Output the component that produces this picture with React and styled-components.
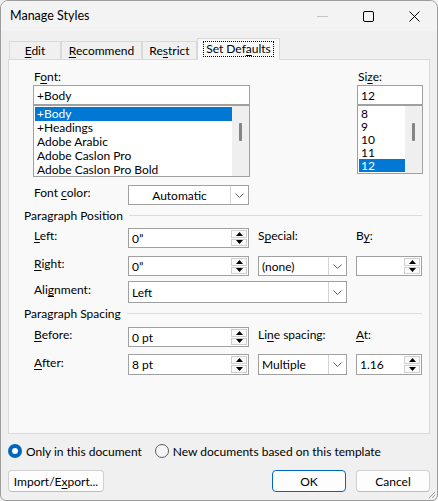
import React from "react";
import styled, { createGlobalStyle } from "styled-components";

const GlobalStyle = createGlobalStyle`
  html, body {
    margin: 0;
    padding: 0;
    background: #f0f0f0;
  }
  body {
    font-family: Lato, "Noto Sans", "DejaVu Sans", sans-serif;
    font-size: 12px;
    color: #000;
  }
`;

const Window = styled.div`
  position: relative;
  box-sizing: border-box;
  width: 438px;
  height: 501px;
  border: 1px solid #9c9c9c;
  border-radius: 8px 8px 6px 6px;
  background: #f0f0f0;
  display: flex;
  flex-direction: column;
  overflow: hidden;
`;

const TitleBar = styled.div`
  height: 30px;
  flex: none;
  display: flex;
  align-items: center;
  background: #f3f3f3;
`;

const Title = styled.div`
  flex: 1;
  padding-left: 9px;
  font-size: 12.5px;
  line-height: 30px;
`;

const CaptionButton = styled.div`
  width: 46px;
  height: 30px;
  display: flex;
  align-items: center;
  justify-content: center;
`;

const Body = styled.div`
  flex: 1;
  display: flex;
  flex-direction: column;
  padding: 7px 7px 8px 7px;
  min-height: 0;
`;

const Tabs = styled.div`
  display: flex;
  align-items: flex-end;
  height: 22px;
  padding-left: 1px;
  margin-bottom: -1px;
  position: relative;
  z-index: 1;
`;

const Tab = styled.div`
  box-sizing: border-box;
  width: ${p => p.$w}px;
  height: ${p => (p.$active ? 22 : 19)}px;
  border: 1px solid #d9d9d9;
  border-bottom: ${p => (p.$active ? "none" : "1px solid #d9d9d9")};
  background: ${p => (p.$active ? "#f9f9f9" : "#f0f0f0")};
  display: flex;
  align-items: center;
  justify-content: center;
  padding-bottom: ${p => (p.$active ? 2 : 1)}px;
`;

const Focus = styled.span`
  border: 1px dotted #000;
  padding: 0 2px;
  line-height: 14px;
`;

const Key = styled.span`
  text-decoration: underline;
  text-underline-offset: 2px;
`;

const Panel = styled.div`
  flex: 1;
  box-sizing: border-box;
  border: 1px solid #d9d9d9;
  background: #f9f9f9;
  padding: 9px 6px 0 15px;
  display: flex;
  flex-direction: column;
`;

const FontBlock = styled.div`
  display: grid;
  grid-template-columns: 217px 1fr 66px;
  padding-left: 9px;
`;

const Column = styled.div`
  display: flex;
  flex-direction: column;
  grid-column: ${p => p.$col};
`;

const TopLabel = styled.div`
  height: 15px;
  line-height: 15px;
  padding-left: 1px;
  margin-bottom: 1px;
`;

const Row = styled.div`
  display: grid;
  grid-template-columns: 95px 121px 89px 66px;
  column-gap: 9px;
  height: ${p => p.$h}px;
  margin-top: ${p => p.$mt}px;
  align-items: center;
`;

const Label = styled.div`
  padding-left: ${p => (p.$indent ? 10 : 0)}px;
  grid-column: ${p => p.$col || "auto"};
  padding-bottom: 5px;
  white-space: nowrap;
`;

const Header = styled.div`
  display: flex;
  align-items: center;
  gap: 6px;
  height: 16px;
  margin-top: ${p => p.$mt}px;
  width: 398px;
  &::after {
    content: "";
    flex: 1;
    height: 1px;
    background: #dcdcdc;
  }
`;

const Field = styled.div`
  box-sizing: border-box;
  height: ${p => p.$h || 20}px;
  border: 1px solid #a0a0a0;
  background: #fff;
  display: flex;
  align-items: stretch;
  grid-column: ${p => p.$span || "auto"};
`;

const FieldText = styled.div`
  flex: 1;
  padding-left: ${p => (p.$center ? 0 : 3)}px;
  display: flex;
  align-items: center;
  justify-content: ${p => (p.$center ? "center" : "flex-start")};
  white-space: nowrap;
`;

const Spin = styled.div`
  width: 16px;
  display: flex;
  flex-direction: column;
  justify-content: center;
  gap: 1px;
  padding: 1px 1px 1px 0;
`;

const SpinButton = styled.div`
  flex: 1;
  max-height: 8px;
  border: 1px solid #cfcfcf;
  background: #fafafa;
  display: flex;
  align-items: center;
  justify-content: center;
`;

const DropButton = styled.div`
  width: 17px;
  border-left: 1px solid #d4d4d4;
  display: flex;
  align-items: center;
  justify-content: center;
`;

const ListBox = styled.div`
  box-sizing: border-box;
  height: ${p => p.$h}px;
  border: 1px solid #a0a0a0;
  background: #fff;
  display: flex;
`;

const Items = styled.div`
  flex: 1;
  padding: 1px 0 0 1px;
  overflow: hidden;
`;

const Item = styled.div`
  height: ${p => p.$ih}px;
  line-height: ${p => p.$ih}px;
  padding-left: 2px;
  white-space: nowrap;
  background: ${p => (p.$sel ? "#0078d4" : "transparent")};
  color: ${p => (p.$sel ? "#fff" : "#000")};
`;

const Track = styled.div`
  width: 17px;
  background: #efefef;
  display: flex;
  justify-content: center;
  padding-top: 17px;
`;

const Thumb = styled.div`
  width: 3px;
  height: 18px;
  border-radius: 1px;
  background: #858585;
`;

const RadioRow = styled.div`
  display: flex;
  align-items: center;
  height: 14px;
  margin-top: 10px;
  gap: 13px;
`;

const RadioOption = styled.div`
  display: flex;
  align-items: center;
  gap: 4px;
  white-space: nowrap;
`;

const RadioDot = styled.div`
  box-sizing: border-box;
  width: 14px;
  height: 14px;
  border-radius: 50%;
  border: ${p => (p.$on ? "none" : "1px solid #5c5c5c")};
  background: ${p => (p.$on ? "#0067c0" : "#f5f5f5")};
  display: flex;
  align-items: center;
  justify-content: center;
  &::after {
    content: "";
    display: ${p => (p.$on ? "block" : "none")};
    width: 6px;
    height: 6px;
    border-radius: 50%;
    background: #fff;
  }
`;

const ButtonRow = styled.div`
  display: flex;
  margin-top: 12px;
  gap: 10px;
`;

const Button = styled.div`
  box-sizing: border-box;
  width: ${p => p.$w}px;
  height: 22px;
  border: 1px solid ${p => (p.$primary ? "#0067c0" : "#d0d0d0")};
  border-bottom-color: ${p => (p.$primary ? "#0067c0" : "#bdbdbd")};
  border-radius: 4px;
  background: #fdfdfd;
  display: flex;
  align-items: center;
  justify-content: center;
  margin-left: ${p => (p.$push ? "auto" : "0")};
`;

const Grip = styled.svg`
  position: absolute;
  right: 1px;
  bottom: 1px;
`;

const Up = () => (
  <svg width="7" height="4" viewBox="0 0 7 4"><path d="M0 4 L3.5 0 L7 4 Z" fill="#000" /></svg>
);
const Down = () => (
  <svg width="7" height="4" viewBox="0 0 7 4"><path d="M0 0 L3.5 4 L7 0 Z" fill="#000" /></svg>
);
const Chevron = () => (
  <svg width="9" height="5" viewBox="0 0 9 5"><path d="M0.5 0.5 L4.5 4.5 L8.5 0.5" fill="none" stroke="#606060" strokeWidth="1" /></svg>
);

const SpinBox = ({ value, h }) => (
  <Field $h={h}>
    <FieldText>{value}</FieldText>
    <Spin>
      <SpinButton><Up /></SpinButton>
      <SpinButton><Down /></SpinButton>
    </Spin>
  </Field>
);

const Combo = ({ value, h, span, center }) => (
  <Field $h={h} $span={span}>
    <FieldText $center={center}>{value}</FieldText>
    <DropButton><Chevron /></DropButton>
  </Field>
);

const fonts = ["+Body", "+Headings", "Adobe Arabic", "Adobe Caslon Pro", "Adobe Caslon Pro Bold"];
const sizes = ["8", "9", "10", "11", "12"];

export default function App() {
  return (
    <>
      <GlobalStyle />
      <Window>
        <TitleBar>
          <Title>Manage Styles</Title>
          <CaptionButton>
            <svg width="11" height="1"><rect width="11" height="1" fill="#c4c4c4" /></svg>
          </CaptionButton>
          <CaptionButton>
            <svg width="11" height="11" viewBox="0 0 11 11"><rect x="0.5" y="0.5" width="10" height="10" rx="1.5" fill="none" stroke="#000" /></svg>
          </CaptionButton>
          <CaptionButton>
            <svg width="11" height="11" viewBox="0 0 11 11"><path d="M0.5 0.5 L10.5 10.5 M10.5 0.5 L0.5 10.5" stroke="#000" strokeWidth="1" /></svg>
          </CaptionButton>
        </TitleBar>
        <Body>
          <Tabs>
            <Tab $w={52}><span><Key>E</Key>dit</span></Tab>
            <Tab $w={81}><span><Key>R</Key>ecommend</span></Tab>
            <Tab $w={55}><span>Re<Key>s</Key>trict</span></Tab>
            <Tab $w={83} $active><Focus>Set Def<Key>a</Key>ults</Focus></Tab>
          </Tabs>
          <Panel>
            <FontBlock>
              <Column $col={1}>
                <TopLabel>F<Key>o</Key>nt:</TopLabel>
                <Field $h={20}><FieldText>+Body</FieldText></Field>
                <ListBox $h={72}>
                  <Items>
                    {fonts.map((f, i) => (
                      <Item key={f} $ih={14} $sel={i === 0}>{f}</Item>
                    ))}
                  </Items>
                  <Track><Thumb /></Track>
                </ListBox>
              </Column>
              <Column $col={3}>
                <TopLabel>Si<Key>z</Key>e:</TopLabel>
                <Field $h={20}><FieldText>12</FieldText></Field>
                <ListBox $h={69}>
                  <Items>
                    {sizes.map((s, i) => (
                      <Item key={s} $ih={13} $sel={i === 4}>{s}</Item>
                    ))}
                  </Items>
                  <Track><Thumb /></Track>
                </ListBox>
              </Column>
            </FontBlock>

            <Row $h={20} $mt={8}>
              <Label $indent>Font <Key>c</Key>olor:</Label>
              <Combo value="Automatic" center />
            </Row>

            <Header $mt={2}>Paragraph Position</Header>

            <Row $h={20} $mt={5}>
              <Label $indent><Key>L</Key>eft:</Label>
              <SpinBox value={"0\u201D"} />
              <Label>S<Key>p</Key>ecial:</Label>
              <Label>B<Key>y</Key>:</Label>
            </Row>
            <Row $h={20} $mt={8}>
              <Label $indent><Key>R</Key>ight:</Label>
              <SpinBox value={"0\u201D"} />
              <Combo value="(none)" />
              <SpinBox value="" />
            </Row>
            <Row $h={22} $mt={5}>
              <Label $indent>Ali<Key>g</Key>nment:</Label>
              <Combo value="Left" h={22} span="2 / span 2" />
            </Row>

            <Header $mt={2}>Paragraph Spacing</Header>

            <Row $h={20} $mt={6}>
              <Label $indent><Key>B</Key>efore:</Label>
              <SpinBox value="0 pt" />
              <Label>Li<Key>n</Key>e spacing:</Label>
              <Label><Key>A</Key>t:</Label>
            </Row>
            <Row $h={21} $mt={7}>
              <Label $indent><Key>A</Key>fter:</Label>
              <SpinBox value="8 pt" h={21} />
              <Combo value="Multiple" h={21} />
              <SpinBox value="1.16" h={21} />
            </Row>
          </Panel>

          <RadioRow>
            <RadioOption><RadioDot $on />Only in this document</RadioOption>
            <RadioOption><RadioDot />New documents based on this template</RadioOption>
          </RadioRow>

          <ButtonRow>
            <Button $w={96}>Import/E<Key>x</Key>port...</Button>
            <Button $w={74} $primary $push>OK</Button>
            <Button $w={74}>Cancel</Button>
          </ButtonRow>
        </Body>
        <Grip width="9" height="9" viewBox="0 0 9 9">
          <path d="M8 2 L2 8 M8 5 L5 8" stroke="#a0a0a0" strokeWidth="1" />
        </Grip>
      </Window>
    </>
  );
}
